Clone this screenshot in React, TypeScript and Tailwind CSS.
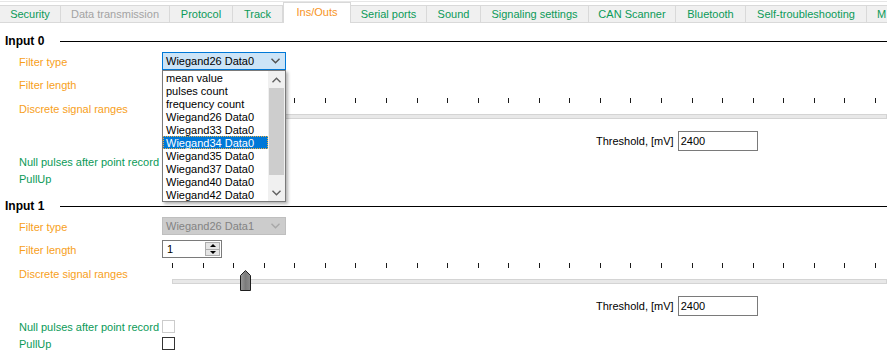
import React from "react";

const tabs = [
  { label: "Security", w: "w-[61px]", state: "normal" },
  { label: "Data transmission", w: "w-[109px]", state: "disabled" },
  { label: "Protocol", w: "w-[63px]", state: "normal" },
  { label: "Track", w: "w-[50px]", state: "normal" },
  { label: "Ins/Outs", w: "w-[68px]", state: "active" },
  { label: "Serial ports", w: "w-[76px]", state: "normal" },
  { label: "Sound", w: "w-[54px]", state: "normal" },
  { label: "Signaling settings", w: "w-[108px]", state: "normal" },
  { label: "CAN Scanner", w: "w-[87px]", state: "normal" },
  { label: "Bluetooth", w: "w-[70px]", state: "normal" },
  { label: "Self-troubleshooting", w: "w-[121px]", state: "normal" },
];

const filterOptions = [
  "mean value",
  "pulses count",
  "frequency count",
  "Wiegand26 Data0",
  "Wiegand33 Data0",
  "Wiegand34 Data0",
  "Wiegand35 Data0",
  "Wiegand37 Data0",
  "Wiegand40 Data0",
  "Wiegand42 Data0",
];

const Chevron = ({ color, dir = "down" }: { color: string; dir?: "down" | "up" }) => (
  <svg width="9" height="6" viewBox="0 0 9 6">
    <polyline
      points={dir === "down" ? "0.5,0.8 4.5,4.8 8.5,0.8" : "0.5,5.2 4.5,1.2 8.5,5.2"}
      fill="none"
      stroke={color}
      strokeWidth="1.4"
    />
  </svg>
);

const Tabs = () => (
  <div className="w-full overflow-hidden">
    <div className="mt-px h-px bg-[#e6e6e6] w-full" />
    <div className="flex items-end h-[21px] w-[1000px]">
      {tabs.map((t) =>
        t.state === "active" ? (
          <div
            key={t.label}
            className={`${t.w} h-[21px] bg-white border-t border-x border-[#d9d9d9] flex items-center justify-center text-[#f7941d] pb-px`}
          >
            {t.label}
          </div>
        ) : (
          <div
            key={t.label}
            className={`${t.w} h-[18px] bg-[#f0f0f0] border-t border-r border-b border-[#d9d9d9] flex items-center justify-center ${
              t.state === "disabled" ? "text-[#a3a3a3]" : "text-[#0b9a58]"
            }`}
          >
            {t.label}
          </div>
        )
      )}
      {/* last tab is clipped by the window edge */}
      <div className="w-[60px] h-[18px] bg-[#f0f0f0] border-t border-r border-b border-[#d9d9d9] flex items-center pl-[10px] text-[#0b9a58] overflow-hidden">
        <span className="w-[10px] overflow-hidden">M</span>
      </div>
    </div>
  </div>
);

const Dropdown = () => (
  <div className="absolute left-0 top-[18px] z-10 w-[124px] h-[132px] bg-white border border-[#7a7a7a] flex shadow-[2px_2px_3px_rgba(0,0,0,0.3)]">
    <div className="flex-1 flex flex-col">
      {filterOptions.map((o) =>
        o === "Wiegand34 Data0" ? (
          <div
            key={o}
            className="h-[13px] leading-[12px] pl-[2px] bg-[#0078d7] text-white border border-dotted border-[#f0b040]"
          >
            {o}
          </div>
        ) : (
          <div key={o} className="h-[13px] leading-[14px] pl-[3px] text-black">
            {o}
          </div>
        )
      )}
    </div>
    <div className="w-[17px] bg-[#f0f0f0] flex flex-col">
      <div className="h-[17px] flex items-center justify-center">
        <Chevron color="#606060" dir="up" />
      </div>
      <div className="h-[87px] mx-[1px] bg-[#cdcdcd]" />
      <div className="flex-1" />
      <div className="h-[17px] flex items-center justify-center">
        <Chevron color="#606060" />
      </div>
    </div>
  </div>
);

const Select = ({ value, open, disabled }: { value: string; open?: boolean; disabled?: boolean }) => (
  <div className="relative w-[124px] h-[18px]">
    <div
      className={`w-full h-full flex items-center justify-between pl-[3px] pr-[5px] border ${
        disabled
          ? "bg-[#cccccc] border-[#bfbfbf] text-[#838383]"
          : "bg-[#cce4f7] border-[#0078d7] text-black"
      }`}
    >
      <span>{value}</span>
      <Chevron color={disabled ? "#a8a8a8" : "#505050"} />
    </div>
    {open && <Dropdown />}
  </div>
);

const SpinBox = () => (
  <div className="w-[60px] h-[18px] border border-[#7a7a7a] bg-white flex">
    <div className="flex-1 pl-[4px] leading-[17px] text-black">1</div>
    <div className="w-[15px] my-[1px] mr-[1px] border border-[#adadad] bg-[#e5e5e5] flex flex-col">
      <div className="flex-1 flex items-center justify-center border-b border-[#adadad]">
        <div className="w-0 h-0 border-x-[3px] border-x-transparent border-b-[3px] border-b-black" />
      </div>
      <div className="flex-1 flex items-center justify-center">
        <div className="w-0 h-0 border-x-[3px] border-x-transparent border-t-[3px] border-t-black" />
      </div>
    </div>
  </div>
);

const Slider = () => (
  <div className="relative flex-1 h-full overflow-hidden">
    <div className="ml-[10px] mt-[1px] w-[704px] h-[5px] flex justify-between">
      {Array.from({ length: 24 }).map((_, i) => (
        <div key={i} className="w-px h-[5px] bg-[#1a1a1a]" />
      ))}
    </div>
    <div className="ml-[10px] mt-[11px] h-[5px] bg-[#e8e8e8] border border-[#d4d4d4]" />
    <svg className="absolute left-[78px] top-[8px]" width="11" height="21" viewBox="0 0 11 21">
      <defs>
        <linearGradient id="thumbGrad" x1="0" x2="1" y1="0" y2="0">
          <stop offset="0" stopColor="#9a9a9a" />
          <stop offset="0.5" stopColor="#7b7b7b" />
          <stop offset="1" stopColor="#8d8d8d" />
        </linearGradient>
      </defs>
      <path d="M0.5 5.5 L5.5 0.5 L10.5 5.5 V20.5 H0.5 Z" fill="url(#thumbGrad)" stroke="#1e1e1e" />
    </svg>
  </div>
);

const Label = ({ text, color }: { text: string; color: "orange" | "green" }) => (
  <div className={`w-[162px] pl-[19px] pt-[2px] ${color === "orange" ? "text-[#f7a01b]" : "text-[#0b9a58]"}`}>
    {text}
  </div>
);

const InputSection = ({ name, first }: { name: string; first?: boolean }) => (
  <div className="flex flex-col h-[165px]">
    <div className="h-[16px] flex items-center">
      <div className="w-[60px] pl-[5px] font-bold text-[12px] text-black">{name}</div>
      <div className="flex-1 h-px bg-black" />
    </div>
    <div className="mt-[3px] h-[18px] flex items-center">
      <Label text="Filter type" color="orange" />
      <Select value={first ? "Wiegand26 Data0" : "Wiegand26 Data1"} open={first} disabled={!first} />
    </div>
    <div className="mt-[5px] h-[18px] flex items-center">
      <Label text="Filter length" color="orange" />
      <SpinBox />
    </div>
    <div className="mt-[4px] h-[32px] flex items-start">
      <div className="pt-[4px]">
        <Label text="Discrete signal ranges" color="orange" />
      </div>
      <Slider />
    </div>
    <div className="mt-[2px] h-[20px] flex items-center justify-start">
      <div className="ml-[596px] mr-[4px] text-black">Threshold, [mV]</div>
      <div className="w-[80px] h-[20px] border border-[#7a7a7a] pl-[2px] leading-[18px] text-black">2400</div>
    </div>
    <div className="mt-[4px] h-[13px] flex items-center">
      <Label text="Null pulses after point record" color="green" />
      <div className="w-[13px] h-[13px] border border-[#cccccc] bg-white" />
    </div>
    <div className="mt-[4px] h-[13px] flex items-center">
      <Label text="PullUp" color="green" />
      <div className="w-[13px] h-[13px] border border-[#333333] bg-white" />
    </div>
  </div>
);

const App = () => {
  return (
    <div
      className="w-[887px] h-[359px] bg-white overflow-hidden text-[11px] leading-[13px]"
      style={{ fontFamily: '"Liberation Sans", Arial, sans-serif' }}
    >
      <Tabs />
      <div className="mt-[10px] flex flex-col">
        <InputSection name="Input 0" first />
        <InputSection name="Input 1" />
      </div>
    </div>
  );
};

export default App;
